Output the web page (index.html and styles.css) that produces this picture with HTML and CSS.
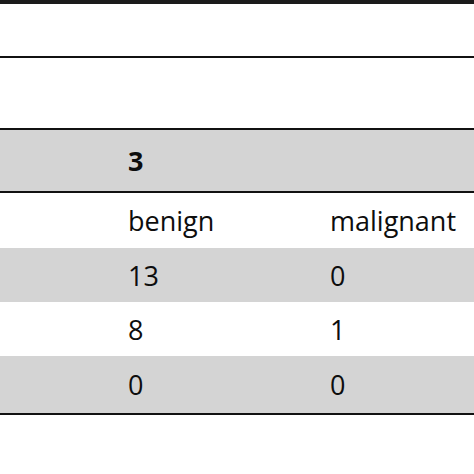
FILE: index.html
```html
<!DOCTYPE html>
<html>
<head>
<meta charset="utf-8">
<link rel="stylesheet" href="styles.css">
</head>
<body>
<div class="table">
  <div class="row r1"></div>
  <div class="row r2"></div>
  <div class="row r3 gray"><span></span><span class="bold">3</span><span></span></div>
  <div class="row r4"><span></span><span>benign</span><span>malignant</span></div>
  <div class="row r5 gray"><span></span><span>13</span><span>0</span></div>
  <div class="row r6"><span></span><span>8</span><span>1</span></div>
  <div class="row r7 gray"><span></span><span>0</span><span>0</span></div>
</div>
</body>
</html>
```
FILE: styles.css
```css
html, body {
  margin: 0;
  padding: 0;
  background: #ffffff;
}
body {
  width: 474px;
  height: 474px;
  overflow: hidden;
  font-family: "Open Sans", "Noto Sans", sans-serif;
  font-size: 27px;
  color: #0d0d0d;
}
.table {
  border-top: 4px solid #1b1b1b;
  border-bottom: 2px solid #111111;
}
.row {
  display: grid;
  grid-template-columns: 128px 202px 1fr;
  align-items: center;
  line-height: 1;
}
.gray {
  background: #d4d4d4;
}
.r1 { height: 52px; border-bottom: 2px solid #111111; }
.r2 { height: 70px; border-bottom: 2px solid #111111; }
.r3 { height: 61px; border-bottom: 2px solid #111111; }
.r4 { height: 55px; }
.r5 { height: 54px; }
.r6 { height: 54px; }
.r7 { height: 57px; }
.bold { font-weight: 700; }
```
